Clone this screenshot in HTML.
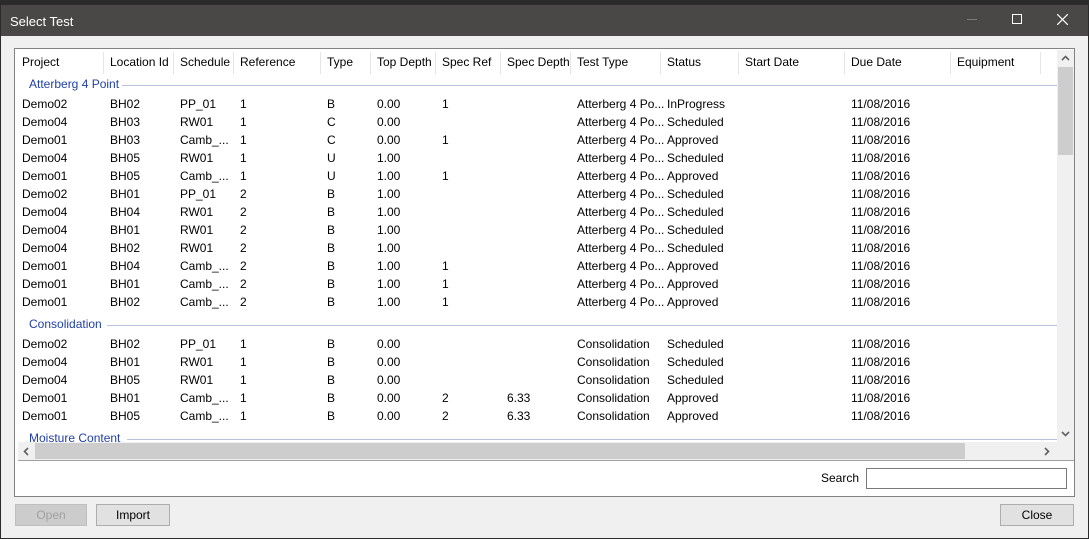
<!DOCTYPE html>
<html><head><style>
*{margin:0;padding:0;box-sizing:border-box}
body{width:1089px;height:539px;background:#2b2b2b;font-family:"Liberation Sans",sans-serif;font-size:12px;color:#000;position:relative;overflow:hidden}
.win{position:absolute;left:1px;top:5px;width:1087px;height:533px;background:#f0f0f0}
.title{position:absolute;left:0;top:0;width:1087px;height:31px;background:#4a4846;color:#fff;font-size:13px}
.title span{position:absolute;left:9px;top:9px}
.panel{position:absolute;left:13px;top:43px;width:1061px;height:449px;border:1px solid #828282;background:#fff}
.list{position:absolute;left:3px;top:1px;width:1056px;height:411px;border-bottom:1px solid #a0a0a0;background:#fff;overflow:hidden}
.t{position:absolute;white-space:nowrap}
.sep{position:absolute;top:2px;width:1px;height:22px;background:#e5e5e5}
.grp{position:absolute;left:11px;color:#1f3fa6;font-size:12px}
.gl{position:absolute;height:1px;background:#b8c2d8}
.btn{position:absolute;top:499px;height:22px;border:1px solid #adadad;background:#e1e1e1;text-align:center;line-height:20px}
</style></head><body>
<div class="win">
<div class="title"><span>Select Test</span>
<div style="position:absolute;left:966px;top:14px;width:10px;height:1px;background:#7a7a7a"></div>
<div style="position:absolute;left:1011px;top:9px;width:10px;height:10px;border:1px solid #fff"></div>
<svg style="position:absolute;left:1056px;top:9px" width="11" height="11"><path d="M0 0L11 11M11 0L0 11" stroke="#fff" stroke-width="1.2"/></svg>
</div>
<div class="panel">
<div class="list" id="L"></div>
<div class="t" style="left:806px;top:422px">Search</div>
<div style="position:absolute;left:851px;top:419px;width:201px;height:21px;border:1px solid #7a7a7a;background:#fff"></div>
</div>
<div class="btn" style="left:14px;width:72px;color:#a0a0a0;background:#cccccc;border-color:#bfbfbf">Open</div>
<div class="btn" style="left:95px;width:74px">Import</div>
<div class="btn" style="left:999px;width:74px">Close</div>
</div>
<script>
var L=document.getElementById('L');var h='';
var cols=[4,92,162,222,309,359,424,489,559,649,727,833,939];
var seps=[85,155,215,302,352,417,482,552,642,720,826,932,1022];
var hd=['Project','Location Id','Schedule','Reference','Type','Top Depth','Spec Ref','Spec Depth','Test Type','Status','Start Date','Due Date','Equipment'];
hd.forEach(function(s,i){h+='<div class="t" style="left:'+cols[i]+'px;top:5px">'+s+'</div>'});
seps.forEach(function(x){h+='<div class="sep" style="left:'+x+'px"></div>'});
var A='Atterberg 4 Po...';
var g1=[['Demo02','BH02','PP_01','1','B','0.00','1','',A,'InProgress'],['Demo04','BH03','RW01','1','C','0.00','','',A,'Scheduled'],['Demo01','BH03','Camb_...','1','C','0.00','1','',A,'Approved'],['Demo04','BH05','RW01','1','U','1.00','','',A,'Scheduled'],['Demo01','BH05','Camb_...','1','U','1.00','1','',A,'Approved'],['Demo02','BH01','PP_01','2','B','1.00','','',A,'Scheduled'],['Demo04','BH04','RW01','2','B','1.00','','',A,'Scheduled'],['Demo04','BH01','RW01','2','B','1.00','','',A,'Scheduled'],['Demo04','BH02','RW01','2','B','1.00','','',A,'Scheduled'],['Demo01','BH04','Camb_...','2','B','1.00','1','',A,'Approved'],['Demo01','BH01','Camb_...','2','B','1.00','1','',A,'Approved'],['Demo01','BH02','Camb_...','2','B','1.00','1','',A,'Approved']];
var C='Consolidation';
var g2=[['Demo02','BH02','PP_01','1','B','0.00','','',C,'Scheduled'],['Demo04','BH01','RW01','1','B','0.00','','',C,'Scheduled'],['Demo04','BH05','RW01','1','B','0.00','','',C,'Scheduled'],['Demo01','BH01','Camb_...','1','B','0.00','2','6.33',C,'Approved'],['Demo01','BH05','Camb_...','1','B','0.00','2','6.33',C,'Approved']];
function grp(name,y,w){h+='<div class="grp t" style="top:'+(y-8)+'px">'+name+'</div><div class="gl" style="left:'+(w+14)+'px;width:'+(1039-w-14)+'px;top:'+y+'px"></div>';}
function rows(g,y0){g.forEach(function(r,j){var y=y0+j*18;r.forEach(function(s,i){if(s)h+='<div class="t" style="left:'+cols[i]+'px;top:'+y+'px">'+s+'</div>'});h+='<div class="t" style="left:'+cols[11]+'px;top:'+y+'px">11/08/2016</div>'})}
grp('Atterberg 4 Point',35,90);rows(g1,47);
grp('Consolidation',275,75);rows(g2,287);
grp('Moisture Content',389,95);
h+='<div style="position:absolute;left:1039px;top:0;width:17px;height:392px;background:#f0f0f0"></div>';
h+='<div style="position:absolute;left:1040px;top:17px;width:15px;height:88px;background:#cdcdcd"></div>';
h+='<svg style="position:absolute;left:1043px;top:5px" width="9" height="6"><path d="M1 5L4.5 1.5L8 5" stroke="#606060" stroke-width="1.6" fill="none"/></svg>';
h+='<svg style="position:absolute;left:1043px;top:381px" width="9" height="6"><path d="M1 1L4.5 4.5L8 1" stroke="#606060" stroke-width="1.6" fill="none"/></svg>';
h+='<div style="position:absolute;left:0;top:392px;width:1056px;height:18px;background:#f0f0f0"></div>';
h+='<div style="position:absolute;left:17px;top:393px;width:930px;height:16px;background:#cdcdcd"></div>';
h+='<svg style="position:absolute;left:5px;top:397px" width="6" height="9"><path d="M5 1L1.5 4.5L5 8" stroke="#606060" stroke-width="1.6" fill="none"/></svg>';
h+='<svg style="position:absolute;left:1026px;top:397px" width="6" height="9"><path d="M1 1L4.5 4.5L1 8" stroke="#606060" stroke-width="1.6" fill="none"/></svg>';
L.innerHTML=h;
</script>
</body></html>
